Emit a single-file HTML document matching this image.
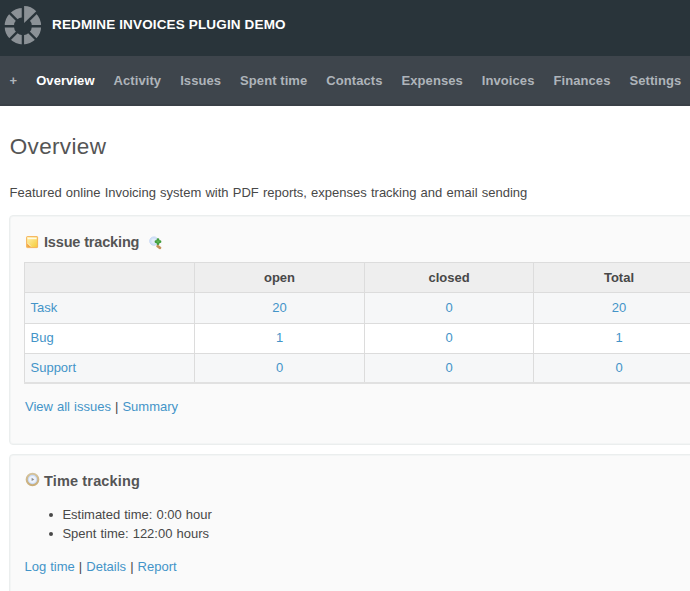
<!DOCTYPE html>
<html>
<head>
<meta charset="utf-8">
<title>Overview - Redmine Invoices plugin demo</title>
<style>
html,body{margin:0;padding:0;}
body{width:690px;height:591px;overflow:hidden;background:#fff;font-family:"Liberation Sans",Arial,sans-serif;font-size:13px;word-spacing:0.45px;color:#484848;position:relative;}
a{color:#4394c8;text-decoration:none;}
#header{position:absolute;left:0;top:0;width:690px;height:56px;background:#29343a;}
#header h1{position:absolute;left:52px;top:17px;margin:0;font-size:13.5px;line-height:16px;font-weight:bold;color:#fff;letter-spacing:0.15px;word-spacing:0;white-space:nowrap;}
#logo{position:absolute;left:0;top:0;}
#main-menu{position:absolute;left:0;top:56px;width:690px;height:48px;background:#3e454c;border-bottom:2px solid #3a4047;}
#main-menu ul{margin:0;padding:0;list-style:none;white-space:nowrap;position:absolute;left:0;top:0;}
#main-menu li{display:inline-block;margin:0;padding:0;}
#main-menu a{display:block;color:#aeb4ba;font-weight:bold;font-size:13px;line-height:15px;padding:17px 9.5px 0;word-spacing:0;letter-spacing:0.075px;}
#main-menu a.selected{color:#fff;}
#content{position:absolute;left:0;top:106px;width:760px;}
h2{position:absolute;left:9.7px;top:25px;margin:0;font-family:"Liberation Sans",sans-serif;font-weight:normal;font-size:22.5px;letter-spacing:0.35px;line-height:32px;color:#555;}
p.desc{position:absolute;left:9.6px;word-spacing:0.55px;top:77px;margin:0;line-height:20px;white-space:nowrap;}
.box{position:absolute;left:9px;width:712px;background:#fafafa;border:1px solid #ebeeee;border-radius:4px;box-sizing:border-box;box-shadow:inset 0 0 0 1px #f3f5f5;}
h3{margin:0;font-family:"Liberation Sans",sans-serif;font-weight:bold;font-size:14.5px;line-height:16px;color:#555;position:absolute;white-space:nowrap;word-spacing:0;letter-spacing:-0.16px;}
table{border-collapse:collapse;position:absolute;left:14px;top:46px;width:681px;table-layout:fixed;}
td,th{border:1px solid #dcdcdc;height:30px;padding:0 6px 2px;text-align:center;box-sizing:border-box;}
th{height:30px;padding-bottom:0;background:#eee;color:#484848;font-weight:bold;}
td.name{text-align:left;padding-left:5.5px;}
tr.odd td{background:#f6f7f8;}
tr.even td{background:#fff;}
tr.last td{border-bottom:2px solid #e1e1e1;height:29px;padding-bottom:1px;}
.ico{position:absolute;}
ul.tt{position:absolute;margin:0;padding:0;list-style:none;line-height:19.4px;}
ul.tt li{position:relative;}
ul.tt li:before{content:"";position:absolute;left:-13.4px;top:8px;width:4px;height:4px;border-radius:50%;background:#484848;}
</style>
</head>
<body>
<div id="header">
<svg id="logo" width="50" height="56" viewBox="0 0 50 56">
<defs><mask id="lm" maskUnits="userSpaceOnUse" x="0" y="0" width="50" height="56">
<circle cx="22.9" cy="26.2" r="13.625" fill="none" stroke="#fff" stroke-width="9.25"/>
<g stroke="#000" stroke-width="2.35"><line x1="1.90" y1="26.20" x2="43.90" y2="26.20"/><line x1="8.05" y1="11.35" x2="37.75" y2="41.05"/><line x1="22.90" y1="5.20" x2="22.90" y2="47.20"/><line x1="37.75" y1="11.35" x2="8.05" y2="41.05"/></g>
<path d="M22.9 26.2 L22.9 4.2 L44.9 4.2 Z" fill="#000"/>
</mask></defs>
<rect x="0" y="0" width="50" height="56" fill="#8b9196" mask="url(#lm)"/>
<path d="M24.1 23.0 L24.1 6.10 A16.9 16.9 0 0 1 36.26 11.26 Z" fill="#8b9196"/>
</svg>
<h1>REDMINE INVOICES PLUGIN DEMO</h1>
</div>
<div id="main-menu">
<ul>
<li><a href="#">+</a></li><li><a href="#" class="selected">Overview</a></li><li><a href="#">Activity</a></li><li><a href="#">Issues</a></li><li><a href="#">Spent time</a></li><li><a href="#">Contacts</a></li><li><a href="#">Expenses</a></li><li><a href="#">Invoices</a></li><li><a href="#">Finances</a></li><li><a href="#">Settings</a></li>
</ul>
</div>
<div id="content">
<h2>Overview</h2>
<p class="desc">Featured online Invoicing system with PDF reports, expenses tracking and email sending</p>
<div class="box" style="top:109px;height:230px;">
<svg class="ico" style="left:16px;top:20px;" width="13" height="13" viewBox="0 0 13 13"><defs><linearGradient id="ng" x1="0" y1="0" x2="1" y2="1"><stop offset="0" stop-color="#fff3b0"/><stop offset="1" stop-color="#f5c935"/></linearGradient></defs><rect x="0.6" y="0.6" width="11" height="11" rx="0.6" fill="url(#ng)" stroke="#f5b25a" stroke-width="1"/><rect x="1.6" y="1.6" width="9" height="1.6" fill="#fffbe6"/><path d="M1.2 7 L5 10.9 L1.2 10.9 Z" fill="#f2a643"/><path d="M1.6 7.2 L4.8 10.4" stroke="#fff1d0" stroke-width="1"/></svg><h3 style="left:34px;top:18px;">Issue tracking</h3><svg class="ico" style="left:138px;top:19px;" width="16" height="16" viewBox="0 0 16 16"><path d="M9.6 11.2 L12 12.8" stroke="#c4915a" stroke-width="2.7" stroke-linecap="round"/><circle cx="5.9" cy="6.1" r="4.2" fill="#d3e2f8" stroke="#c3d5f3" stroke-width="0.9"/><circle cx="5.9" cy="6.1" r="2.4" fill="#e2ecfb"/><path d="M10 4.7 V8.7 M8 6.7 H12" stroke="#3f9c3b" stroke-width="2.8" stroke-linecap="round"/><path d="M10 5.2 V8.2 M8.5 6.7 H11.5" stroke="#62b558" stroke-width="1"/></svg>
<table>
<colgroup><col style="width:170px"><col style="width:170px"><col style="width:169px"><col style="width:171px"></colgroup>
<tr><th></th><th>open</th><th>closed</th><th>Total</th></tr>
<tr class="odd" style="height:31px"><td class="name" style="height:31px"><a href="#">Task</a></td><td><a href="#">20</a></td><td><a href="#">0</a></td><td><a href="#">20</a></td></tr>
<tr class="even"><td class="name"><a href="#">Bug</a></td><td><a href="#">1</a></td><td><a href="#">0</a></td><td><a href="#">1</a></td></tr>
<tr class="odd last"><td class="name"><a href="#">Support</a></td><td><a href="#">0</a></td><td><a href="#">0</a></td><td><a href="#">0</a></td></tr>
</table>
<p style="position:absolute;left:15px;top:181px;margin:0;line-height:20px;"><a href="#">View all issues</a> | <a href="#">Summary</a></p>
</div>
<div class="box" style="top:348px;height:180px;">
<svg class="ico" style="left:14.7px;top:17px;" width="15" height="15" viewBox="0 0 15 15"><defs><linearGradient id="cg" x1="0" y1="0" x2="0" y2="1"><stop offset="0" stop-color="#d4c29c"/><stop offset="1" stop-color="#c9ad78"/></linearGradient></defs><circle cx="7.5" cy="7.5" r="5.8" fill="#c9dbf6" stroke="url(#cg)" stroke-width="2.1"/><circle cx="7.5" cy="7.5" r="3.6" fill="#eef3fc"/><path d="M6.6 5.7 L9.3 7.5 L6.6 8.9 Z" fill="#8c8c8c"/></svg><h3 style="left:34px;top:18px;letter-spacing:0.15px;">Time tracking</h3>
<ul class="tt" style="left:52.4px;top:50px;">
<li>Estimated time: 0:00 hour</li>
<li>Spent time: 122:00 hours</li>
</ul>
<p style="position:absolute;left:14.5px;top:102px;margin:0;line-height:20px;"><a href="#">Log time</a> | <a href="#">Details</a> | <a href="#">Report</a></p>
</div>
</div>
</body>
</html>
